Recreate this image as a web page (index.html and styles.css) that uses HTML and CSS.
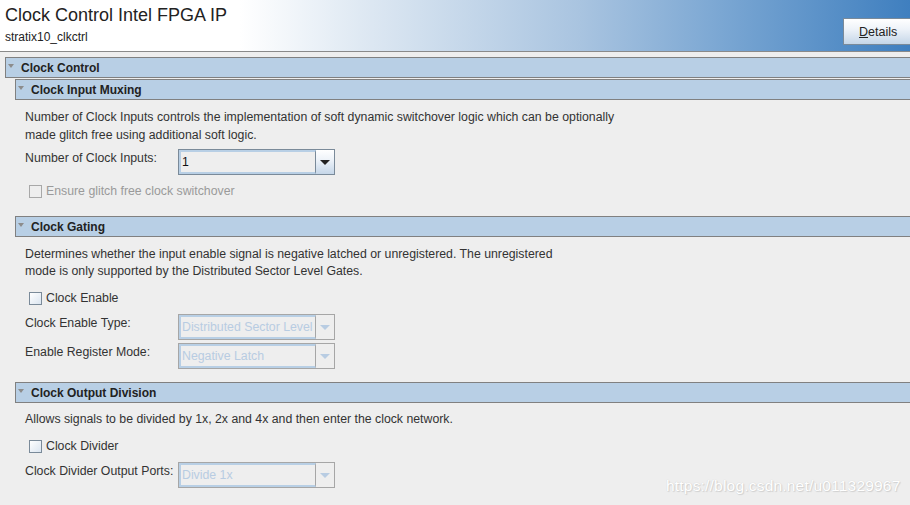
FILE: index.html
```html
<!DOCTYPE html>
<html>
<head>
<meta charset="utf-8">
<link rel="stylesheet" href="styles.css">
</head>
<body>
<div class="header">
  <div class="titles">
    <div class="title">Clock Control Intel FPGA IP</div>
    <div class="subtitle">stratix10_clkctrl</div>
  </div>
  <div class="details"><span class="ul">D</span>etails</div>
</div>
<div class="content">
  <div class="bar top"><span class="tri"></span>Clock Control</div>
  <div class="group">
    <div class="bar"><span class="tri"></span>Clock Input Muxing</div>
    <div class="body">
      <p class="desc d1">Number of Clock Inputs controls the implementation of soft dynamic switchover logic which can be optionally<br>made glitch free using additional soft logic.</p>
      <div class="row r1">
        <span class="label">Number of Clock Inputs:</span>
        <div class="combo"><div class="field">1</div><div class="btn"><span class="arrow"></span></div></div>
      </div>
      <div class="check disabled c1"><span class="box"></span>Ensure glitch free clock switchover</div>
    </div>
  </div>
  <div class="group g2">
    <div class="bar"><span class="tri"></span>Clock Gating</div>
    <div class="body">
      <p class="desc d2">Determines whether the input enable signal is negative latched or unregistered. The unregistered<br>mode is only supported by the Distributed Sector Level Gates.</p>
      <div class="check c2"><span class="box"></span>Clock Enable</div>
      <div class="row r2">
        <span class="label">Clock Enable Type:</span>
        <div class="combo off"><div class="field">Distributed Sector Level</div><div class="btn"><span class="arrow"></span></div></div>
      </div>
      <div class="row r3">
        <span class="label">Enable Register Mode:</span>
        <div class="combo off"><div class="field">Negative Latch</div><div class="btn"><span class="arrow"></span></div></div>
      </div>
    </div>
  </div>
  <div class="group g3">
    <div class="bar"><span class="tri"></span>Clock Output Division</div>
    <div class="body">
      <p class="desc d3">Allows signals to be divided by 1x, 2x and 4x and then enter the clock network.</p>
      <div class="check c3"><span class="box"></span>Clock Divider</div>
      <div class="row r4">
        <span class="label">Clock Divider Output Ports:</span>
        <div class="combo off"><div class="field">Divide 1x</div><div class="btn"><span class="arrow"></span></div></div>
      </div>
    </div>
  </div>
</div>
<div class="watermark">https://blog.csdn.net/u011329967</div>
</body>
</html>
```
FILE: styles.css
```css
html, body {
  margin: 0;
  padding: 0;
}
body {
  width: 910px;
  height: 505px;
  overflow: hidden;
  background: #eeeeee;
  font-family: "Liberation Sans", Arial, sans-serif;
  font-size: 12.3px;
  color: #333333;
  position: relative;
}
.header {
  height: 51px;
  border-bottom: 1px solid #8a8a8a;
  background: linear-gradient(to right, #ffffff 0px, #ffffff 240px, #dfe9f3 360px, #a9c4e0 580px, #78a5d2 730px, #3f7fbf 910px);
  display: flex;
  justify-content: space-between;
  align-items: flex-start;
  overflow: hidden;
}
.titles {
  padding-left: 5px;
  padding-top: 4px;
}
.title {
  font-size: 18px;
  line-height: 22px;
  color: #222222;
}
.subtitle {
  font-size: 12px;
  line-height: 16px;
  margin-top: 3px;
  color: #222222;
}
.details {
  margin-top: 18px;
  margin-right: -6px;
  width: 56px;
  height: 25px;
  box-sizing: content-box;
  border: 1px solid #7a8a99;
  background: linear-gradient(to bottom, #ffffff 0%, #eef3f9 40%, #c5d6e8 100%);
  line-height: 26px;
  text-align: left;
  padding-left: 15px;
  font-size: 12.5px;
  color: #222;
}
.ul {
  text-decoration: underline;
}
.content {
  padding: 5px 0 0 5px;
}
.bar {
  height: 17px;
  padding-top: 2px;
  border: 1px solid #808080;
  border-right: none;
  background: #b8cfe5;
  font-weight: bold;
  color: #222;
  line-height: 17px;
  display: flex;
  align-items: flex-start;
  font-size: 12px;
}
.tri {
  display: inline-block;
  width: 0;
  height: 0;
  border-left: 3.5px solid transparent;
  border-right: 3.5px solid transparent;
  border-top: 4px solid #8c8c8c;
  margin: 4px 7px 0 2px;
}
.group {
  margin-left: 10px;
  margin-top: 1px;
}
.g2 { margin-top: 16px; }
.g3 { margin-top: 13px; }
.body {
  padding-left: 10px;
}
.desc {
  margin: 0;
  line-height: 18px;
}
.d1 { padding-top: 8px; }
.d2 { padding-top: 9px; line-height: 17px; }
.d3 { padding-top: 7px; }
.row {
  display: flex;
  align-items: flex-start;
}
.label {
  width: 153px;
  line-height: 18px;
  margin-top: 0px;
}
.r1 { margin-top: 5px; }
.r2 { margin-top: 7px; }
.r3 { margin-top: 3px; }
.r4 { margin-top: 7px; }
.combo {
  width: 155px;
  height: 24px;
  border: 1px solid #7a8a99;
  display: flex;
  background: #eeeeee;
}
.field {
  flex: 1;
  border: 2px solid #b8cfe5;
  border-right: 1px solid #7a8a99;
  padding-left: 1px;
  line-height: 20px;
  color: #111;
  white-space: nowrap;
  overflow: hidden;
}
.btn {
  width: 18px;
  background: linear-gradient(to bottom, #ffffff 0%, #eef3f9 40%, #c5d6e8 100%);
  display: flex;
  align-items: center;
  justify-content: center;
}
.arrow {
  width: 0;
  height: 0;
  border-left: 5px solid transparent;
  border-right: 5px solid transparent;
  border-top: 5px solid #222;
}
.combo.off {
  border-color: #a6a6a6;
}
.combo.off .field {
  color: #b8cce2;
  border-right-color: #a6a6a6;
}
.combo.off .btn {
  background: #eeeeee;
}
.combo.off .arrow {
  border-top-color: #b8cce2;
}
.check {
  display: flex;
  align-items: center;
  line-height: 18px;
  padding-left: 4px;
}
.box {
  width: 11px;
  height: 11px;
  border: 1px solid #7a8a99;
  background: linear-gradient(135deg, #ffffff 0%, #dbe5f0 100%);
  margin-right: 4px;
}
.check.disabled {
  color: #9a9a9a;
}
.check.disabled .box {
  border-color: #a8a8a8;
  background: #eeeeee;
}
.c1 { margin-top: 7px; }
.c2 { margin-top: 9px; }
.c3 { margin-top: 9px; }
.watermark {
  position: absolute;
  left: 666px;
  top: 477px;
  font-size: 15.5px;
  color: #ffffff;
  text-shadow: 0 0 1px #c8c8c8, 1px 1px 1px #d0d0d0;
  letter-spacing: 0.2px;
}
```
